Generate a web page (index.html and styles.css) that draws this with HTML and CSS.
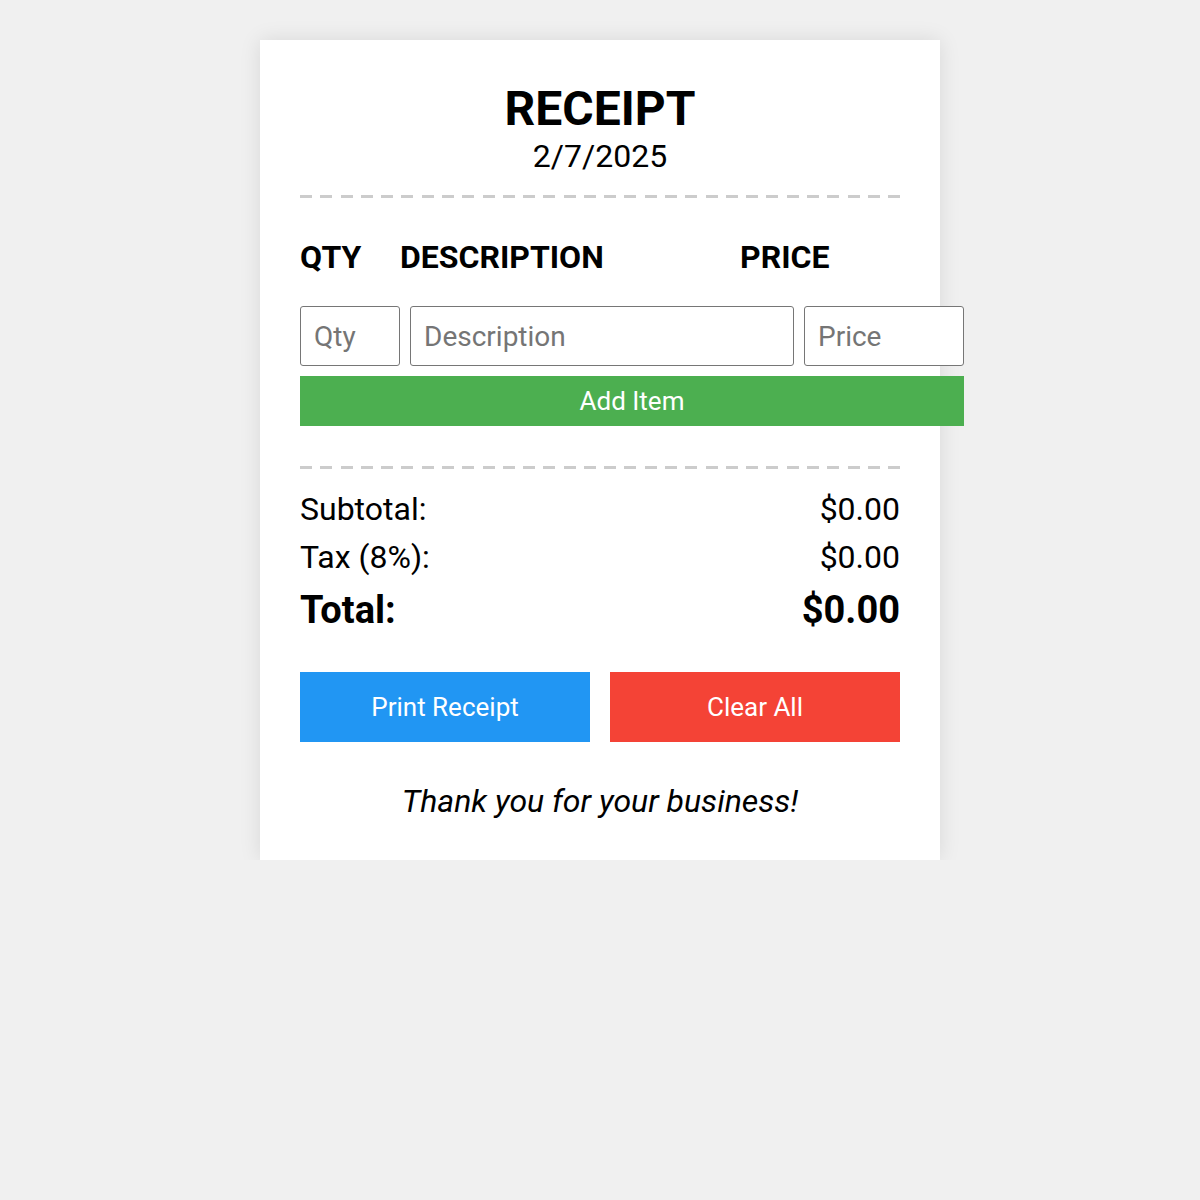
FILE: index.html
```html
<!DOCTYPE html>
<html lang="en">
<head>
    <meta charset="UTF-8">
    <meta name="viewport" content="width=device-width, initial-scale=1.0">
    <title>Receipt</title>
    <link rel="stylesheet" href="styles.css">
</head>
<body>
    <div class="receipt">
        <div class="receipt-header">
            <h1>RECEIPT</h1>
            <div class="date" id="date">2/7/2025</div>
        </div>

        <div class="columns">
            <span>QTY</span>
            <span>DESCRIPTION</span>
            <span>PRICE</span>
        </div>

        <div id="items"></div>

        <form class="item-form" onsubmit="return false;">
            <div class="item-inputs">
                <input type="number" id="qty" class="input-qty" placeholder="Qty">
                <input type="text" id="desc" class="input-desc" placeholder="Description">
                <input type="number" id="price" class="input-price" placeholder="Price">
            </div>
            <button type="button" class="btn btn-add" onclick="addItem()">Add Item</button>
        </form>

        <div class="totals">
            <div class="total-row">
                <span>Subtotal:</span>
                <span id="subtotal">$0.00</span>
            </div>
            <div class="total-row">
                <span>Tax (8%):</span>
                <span id="tax">$0.00</span>
            </div>
            <div class="total-row grand">
                <span>Total:</span>
                <span id="total">$0.00</span>
            </div>
        </div>

        <div class="actions">
            <button type="button" class="btn btn-print" onclick="window.print()">Print Receipt</button>
            <button type="button" class="btn btn-clear" onclick="clearAll()">Clear All</button>
        </div>

        <p class="thanks">Thank you for your business!</p>
    </div>

    <script>
        let items = [];

        function money(n) {
            return '$' + n.toFixed(2);
        }

        function render() {
            const list = document.getElementById('items');
            list.innerHTML = '';
            let subtotal = 0;
            items.forEach(function(item) {
                const row = document.createElement('div');
                row.className = 'item-row';
                row.innerHTML = '<span>' + item.qty + '</span><span>' + item.desc + '</span><span>' + money(item.qty * item.price) + '</span>';
                list.appendChild(row);
                subtotal += item.qty * item.price;
            });
            const tax = subtotal * 0.08;
            document.getElementById('subtotal').textContent = money(subtotal);
            document.getElementById('tax').textContent = money(tax);
            document.getElementById('total').textContent = money(subtotal + tax);
        }

        function addItem() {
            const qty = parseFloat(document.getElementById('qty').value);
            const desc = document.getElementById('desc').value;
            const price = parseFloat(document.getElementById('price').value);

            // Validate inputs
            if (!qty || !desc || isNaN(price)) {
                return;
            }

            items.push({ qty: qty, desc: desc, price: price });
            document.querySelector('.item-form').reset();
            render();
        }

        function clearAll() {
            items = [];
            render();
        }
    </script>
</body>
</html>
```

FILE: styles.css
```css
body {
    font-family: Roboto, "Liberation Sans", Arial, sans-serif;
    margin: 0;
    padding-top: 40px;
    background-color: #f0f0f0;
    display: flex;
    justify-content: center;
    color: #000;
}
.receipt {
    background-color: white;
    width: 680px;
    box-sizing: border-box;
    padding: 40px;
    box-shadow: 0 0 20px rgba(0, 0, 0, 0.1);
}
.receipt-header {
    text-align: center;
    padding-bottom: 23px;
    background: repeating-linear-gradient(to right, #ccc 0, #ccc 12px, transparent 12px, transparent 20.28px) bottom left / 100% 3px no-repeat;
}
h1 {
    margin: 0;
    font-size: 48px;
    font-weight: bold;
}
.date {
    font-size: 32px;
}
.columns, .item-row {
    display: grid;
    grid-template-columns: 100px 340px 160px;
    font-size: 32px;
}
.columns {
    margin-top: 40px;
    font-weight: bold;
}
.item-row {
    margin-top: 10px;
}
.item-inputs {
    display: flex;
    gap: 10px;
    margin-top: 30px;
}
.item-inputs input {
    height: 60px;
    box-sizing: border-box;
    padding: 0 13px;
    font-family: inherit;
    font-size: 28px;
    border: 1px solid #767676;
    border-radius: 3px;
    color: #000;
}
.item-inputs input::placeholder {
    color: #757575;
}
.input-qty {
    width: 100px;
}
.input-desc {
    width: 384px;
}
.input-price {
    width: 160px;
}
.btn {
    font-family: inherit;
    color: white;
    border: none;
    cursor: pointer;
}
.btn-add {
    display: block;
    width: 664px;
    height: 50px;
    margin-top: 10px;
    font-size: 26px;
    background-color: #4caf50;
}
.totals {
    margin-top: 40px;
    padding-top: 24px;
    background: repeating-linear-gradient(to right, #ccc 0, #ccc 12px, transparent 12px, transparent 20.28px) top left / 100% 3px no-repeat;
    display: flex;
    flex-direction: column;
    gap: 10px;
}
.total-row {
    display: flex;
    justify-content: space-between;
    font-size: 32px;
}
.total-row.grand {
    font-size: 38px;
    font-weight: bold;
    margin-top: 2px;
}
.actions {
    display: flex;
    gap: 20px;
    margin-top: 40px;
}
.actions .btn {
    flex: 1;
    height: 70px;
    font-size: 26px;
}
.btn-print {
    background-color: #2196f3;
}
.btn-clear {
    background-color: #f44336;
}
.thanks {
    margin: 40px 0 0;
    text-align: center;
    font-style: italic;
    font-size: 32px;
}
```
